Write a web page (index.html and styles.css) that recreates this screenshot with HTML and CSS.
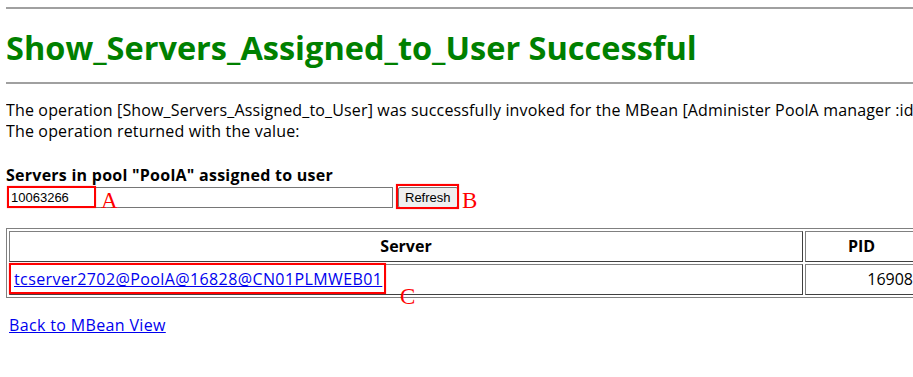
FILE: index.html
```html
<!DOCTYPE html>
<html lang="en">
<head>
  <meta charset="UTF-8">
  <title>Show_Servers_Assigned_to_User Successful</title>
  <link rel="stylesheet" href="styles.css">
</head>
<body>
<hr>
<h1 class="title">Show_Servers_Assigned_to_User Successful</h1>
<hr>
<p class="result">The operation [Show_Servers_Assigned_to_User] was successfully invoked for the MBean [Administer PoolA manager :id=PoolA,type=PoolManager]<br>The operation returned with the value:</p>

<div class="pool">
  <h4 class="pool-title">Servers in pool "PoolA" assigned to user</h4>
  <form class="pool-form">
    <input class="user-input" type="text" value="10063266">
    <button class="refresh" type="button">Refresh</button>
    <!-- annotations -->
    <span class="mark mark-a"></span>
    <span class="letter letter-a">A</span>
    <span class="mark mark-b"></span>
    <span class="letter letter-b">B</span>
  </form>
</div>

<div class="table-wrap">
  <table class="servers">
    <tr>
      <th class="col-server">Server</th>
      <th class="col-pid">PID</th>
    </tr>
    <tr>
      <td><a href="#">tcserver2702@PoolA@16828@CN01PLMWEB01</a></td>
      <td class="num">16908</td>
    </tr>
  </table>
  <span class="mark mark-c"></span>
  <span class="letter letter-c">C</span>
</div>

<p class="back"><a href="#">Back to MBean View</a></p>
</body>
</html>
```

FILE: styles.css
```css
html {
  overflow: hidden;
}

body {
  margin: 6px;
  font-family: "Open Sans", "Noto Sans", sans-serif;
  font-size: 16px;
  color: #000;
  background: #fff;
  width: 1000px;
}

hr {
  margin: 0;
  border: 0;
  border-top: 2px solid #a0a0a0;
}

hr:first-child {
  margin-top: 1px;
}

.title {
  color: #008000;
  font-size: 32.5px;
  font-weight: bold;
  margin: 19px 0 14px;
  line-height: 40px;
}

.result {
  margin: 16px 0 0;
  line-height: 21px;
  white-space: nowrap;
  letter-spacing: 0.15px;
}

.pool {
  margin-top: 23px;
}

.pool-title {
  margin: 0;
  font-size: 16px;
  line-height: 20px;
  letter-spacing: 0.25px;
}

.pool-form {
  position: relative;
  display: flex;
  align-items: center;
  height: 25px;
  margin: 0;
}

.user-input {
  width: 385px;
  height: 21px;
  box-sizing: border-box;
  margin: 0 0 0 2px;
  padding: 1px 2px;
  border: 1px solid #767676;
  font-family: "Liberation Sans", Arial, sans-serif;
  font-size: 13px;
}

.refresh {
  height: 21px;
  margin-left: 5px;
  padding: 0 6px;
  border: 1px solid #767676;
  border-radius: 2px;
  background: #efefef;
  font-family: "Liberation Sans", Arial, sans-serif;
  font-size: 13px;
  color: #000;
}

.mark {
  position: absolute;
  border: 2px solid #ff0000;
  box-shadow: 0 0 1px rgba(255, 0, 0, 0.5);
}

.letter {
  position: absolute;
  color: #ff0000;
  font-family: "Liberation Serif", "Times New Roman", serif;
  font-size: 23px;
  line-height: 1;
}

.mark-a {
  left: 1px;
  top: 1px;
  width: 85px;
  height: 18px;
}

.letter-a {
  left: 95px;
  top: 4px;
}

.mark-b {
  left: 390px;
  top: -1px;
  width: 59px;
  height: 21px;
}

.letter-b {
  left: 456px;
  top: 4px;
}

.table-wrap {
  position: relative;
  margin-top: 18px;
}

.servers {
  width: 915px;
  border: 1px solid #808080;
  border-spacing: 2px;
  border-collapse: separate;
}

.servers th,
.servers td {
  border: 1px solid #808080;
  border-right-color: #404040;
  border-bottom-color: #404040;
  padding: 4px;
  line-height: 21px;
}

.servers th {
  font-weight: bold;
  text-align: center;
}

.col-pid {
  width: 103px;
}

.servers td.num {
  text-align: right;
}

.servers a {
  color: #0000ee;
  letter-spacing: 0.4px;
}

.mark-c {
  left: 3px;
  top: 35px;
  width: 373px;
  height: 27px;
}

.letter-c {
  left: 394px;
  top: 57px;
}

.back {
  margin: 16px 0 0 3px;
  letter-spacing: 0.35px;
}

.back a {
  color: #0000ee;
}
```
